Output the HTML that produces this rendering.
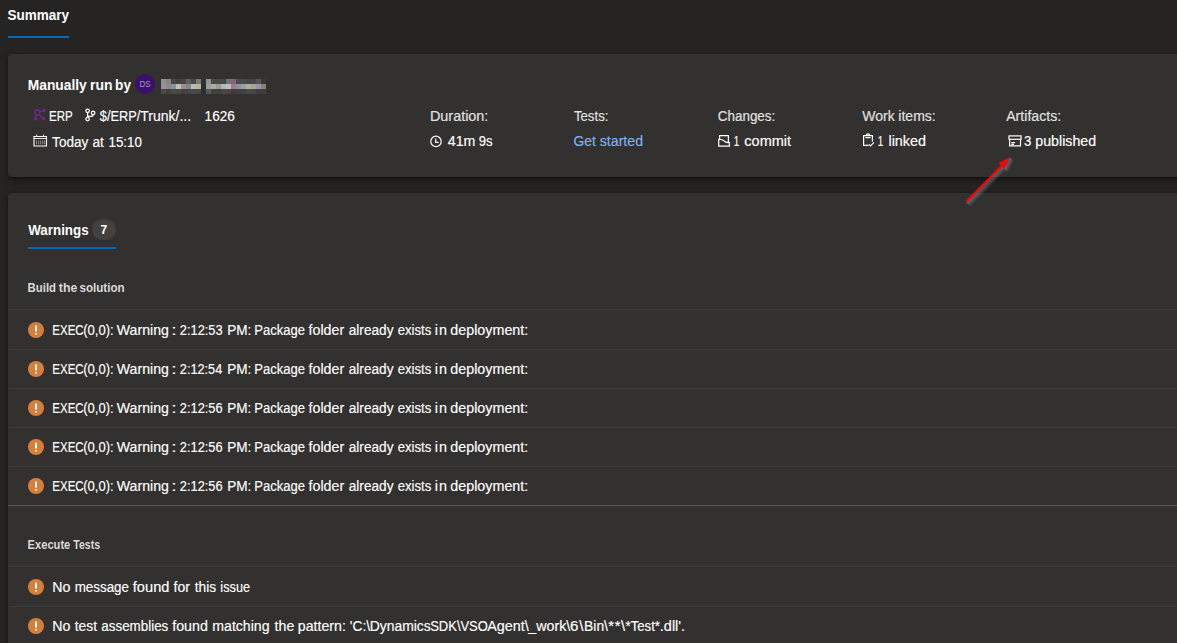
<!DOCTYPE html>
<html lang="en">
<head>
<meta charset="utf-8">
<title>Summary</title>
<style>
*{box-sizing:border-box;margin:0;padding:0}
html,body{width:1177px;height:643px;overflow:hidden;background:#252423}
body{font-family:"Liberation Sans",sans-serif;font-size:14px;color:#fff;position:relative}
.t{position:absolute;left:0;white-space:nowrap;line-height:20px;height:20px;width:1177px}
.t span{position:absolute;left:0;top:0;transform-origin:0 0;-webkit-text-stroke:.15px currentColor}
.sb{font-weight:bold}
.sb span,.av span{-webkit-text-stroke:0}
.av{color:#ab92cc}
.lbl{color:#e2e2e2}
.link{color:#7ab5f5}
.sec{color:#dadada}
.tabline{position:absolute;height:2px;background:#0069b9}
.card{position:absolute;left:8px;right:-12px;background:#323130;border-radius:4px;box-shadow:0 3.2px 7.2px rgba(0,0,0,.38),0 .6px 1.8px rgba(0,0,0,.26)}
#c1{top:54px;height:123px}
#c2{top:193px;height:470px}
.sep{position:absolute;left:8px;right:0;height:1px;background:#3c3b3a}
.in{left:9px}
.wi{position:absolute;left:28px;width:16px;height:16px}
.ov{position:absolute;left:0;top:0;pointer-events:none}
.avatar{position:absolute;left:135px;top:74px;width:20px;height:20px;border-radius:50%;background:#3a1168}
.badge{position:absolute;left:92px;top:219px;width:24px;height:21px;border-radius:10.5px;background:#434140}
</style>
</head>
<body>
<div class="t sb" id="tab" style="top:5px;font-size:14.5px"><span style="transform:translateX(7.47px) scaleX(0.933)">Summary</span></div>
<div class="tabline" style="left:8px;top:36px;width:61px"></div>

<div class="card" id="c1"></div>
<div class="t sb" id="mrb" style="top:75px;font-size:15px"><span style="transform:translateX(27.73px) scaleX(0.919)">Manually</span> <span style="transform:translateX(90.02px) scaleX(0.937)">run</span> <span style="transform:translateX(115.02px) scaleX(0.912)">by</span></div>
<div class="avatar"></div>
<div class="t av" id="ds" style="top:74px;font-size:8.5px"><span style="transform:translateX(139.45px) scaleX(0.939)">DS</span></div>
<div class="t" id="erp" style="top:106px;font-size:14px"><span style="transform:translateX(49.01px) scaleX(0.827)">ERP</span></div>
<div class="t" id="br" style="top:106px;font-size:14px"><span style="transform:translateX(99.8px) scaleX(0.914)">$/ERP/</span><span style="transform:translateX(140.3px)">Trunk/...</span></div>
<div class="t" id="num" style="top:106px;font-size:14px"><span style="transform:translateX(204.54px) scaleX(0.975)">1626</span></div>
<div class="t" id="date" style="top:132px;font-size:14px"><span style="transform:translateX(52.1px) scaleX(0.969)">Today</span> <span style="transform:translateX(92.51px) scaleX(0.976)">at</span> <span style="transform:translateX(108.53px) scaleX(0.953)">15:10</span></div>
<div class="t lbl" id="l1" style="top:106px;font-size:14px"><span style="transform:translateX(429.92px) scaleX(1.029)">Duration:</span></div>
<div class="t" id="v1" style="top:131px;font-size:14px"><span style="transform:translateX(447.73px) scaleX(1.015)">41m</span> <span style="transform:translateX(478.65px) scaleX(0.936)">9s</span></div>
<div class="t lbl" id="l2" style="top:106px;font-size:14px"><span style="transform:translateX(573.89px) scaleX(0.944)">Tests:</span></div>
<div class="t link" id="v2" style="top:131px;font-size:14px"><span style="transform:translateX(573.53px) scaleX(0.991)">Get</span> <span style="transform:translateX(599.73px) scaleX(1.012)">started</span></div>
<div class="t lbl" id="l3" style="top:106px;font-size:14px"><span style="transform:translateX(717.77px) scaleX(0.960)">Changes:</span></div>
<div class="t" id="v3" style="top:131px;font-size:14px"><span style="transform:translateX(733.74px) scaleX(0.700)">1</span> <span style="transform:translateX(744.35px) scaleX(1.035)">commit</span></div>
<div class="t lbl" id="l4" style="top:106px;font-size:14px"><span style="transform:translateX(862.3px)">Work</span> <span style="transform:translateX(898.35px)">items:</span></div>
<div class="t" id="v4" style="top:131px;font-size:14px"><span style="transform:translateX(877.74px) scaleX(0.700)">1</span> <span style="transform:translateX(888.45px) scaleX(1.027)">linked</span></div>
<div class="t lbl" id="l5" style="top:106px;font-size:14px"><span style="transform:translateX(1006.19px) scaleX(1.009)">Artifacts:</span></div>
<div class="t" id="v5" style="top:131px;font-size:14px"><span style="transform:translateX(1024.05px) scaleX(0.942)">3</span> <span style="transform:translateX(1035.3px) scaleX(1.015)">published</span></div>

<div class="card" id="c2"></div>
<div class="t sb" id="warn" style="top:220px;font-size:14.5px"><span style="transform:translateX(28.22px) scaleX(0.922)">Warnings</span></div>
<div class="badge"></div>
<div class="t sb" id="cnt" style="top:220px;font-size:12px"><span style="transform:translateX(100.58px)">7</span></div>
<div class="tabline" style="left:28px;top:247px;width:88px"></div>

<div class="t sec sb" id="s1" style="top:278px;font-size:13px"><span style="transform:translateX(27.59px) scaleX(0.876)">Build</span> <span style="transform:translateX(58.8px) scaleX(0.945)">the</span> <span style="transform:translateX(79.5px) scaleX(0.893)">solution</span></div>
<div class="sep" style="top:309px"></div>
<svg class="wi" style="top:322px" viewBox="0 0 16 16"><circle cx="8" cy="8" r="8" fill="#d67f3c"/><rect x="7" y="3.4" width="2" height="6.2" rx=".6" fill="#fff"/><rect x="7" y="10.9" width="2" height="1.6" rx=".5" fill="#fff"/></svg>
<div class="t" id="r1" style="top:320px;font-size:14px"><span style="transform:translateX(52.27px) scaleX(0.823)">EXEC</span><span style="transform:translateX(83.19px) scaleX(0.931)">(0,0):</span> <span style="transform:translateX(116.8px) scaleX(1.010)">Warning</span> <span style="transform:translateX(171.32px) scaleX(1.385)">:</span> <span style="transform:translateX(179.85px) scaleX(0.916)">2:12:53</span> <span style="transform:translateX(227.13px) scaleX(0.969)">PM:</span> <span style="transform:translateX(254.25px) scaleX(0.931)">Package</span> <span style="transform:translateX(308.6px) scaleX(1.016)">folder</span> <span style="transform:translateX(348.73px) scaleX(0.975)">already</span> <span style="transform:translateX(397.72px) scaleX(0.939)">exists</span> <span style="transform:translateX(434.87px) scaleX(1.022);letter-spacing:0.84px">in</span> <span style="transform:translateX(450.3px) scaleX(1.022)">deployment:</span></div>
<div class="sep in" style="top:349px"></div>
<svg class="wi" style="top:361px" viewBox="0 0 16 16"><circle cx="8" cy="8" r="8" fill="#d67f3c"/><rect x="7" y="3.4" width="2" height="6.2" rx=".6" fill="#fff"/><rect x="7" y="10.9" width="2" height="1.6" rx=".5" fill="#fff"/></svg>
<div class="t" id="r2" style="top:359px;font-size:14px"><span style="transform:translateX(52.27px) scaleX(0.823)">EXEC</span><span style="transform:translateX(83.19px) scaleX(0.931)">(0,0):</span> <span style="transform:translateX(116.8px) scaleX(1.010)">Warning</span> <span style="transform:translateX(171.32px) scaleX(1.385)">:</span> <span style="transform:translateX(179.85px) scaleX(0.908)">2:12:54</span> <span style="transform:translateX(227.13px) scaleX(0.969)">PM:</span> <span style="transform:translateX(254.25px) scaleX(0.931)">Package</span> <span style="transform:translateX(308.6px) scaleX(1.016)">folder</span> <span style="transform:translateX(348.73px) scaleX(0.975)">already</span> <span style="transform:translateX(397.72px) scaleX(0.939)">exists</span> <span style="transform:translateX(434.87px) scaleX(1.022);letter-spacing:0.84px">in</span> <span style="transform:translateX(450.3px) scaleX(1.022)">deployment:</span></div>
<div class="sep in" style="top:388px"></div>
<svg class="wi" style="top:400px" viewBox="0 0 16 16"><circle cx="8" cy="8" r="8" fill="#d67f3c"/><rect x="7" y="3.4" width="2" height="6.2" rx=".6" fill="#fff"/><rect x="7" y="10.9" width="2" height="1.6" rx=".5" fill="#fff"/></svg>
<div class="t" id="r3" style="top:398px;font-size:14px"><span style="transform:translateX(52.27px) scaleX(0.823)">EXEC</span><span style="transform:translateX(83.19px) scaleX(0.931)">(0,0):</span> <span style="transform:translateX(116.8px) scaleX(1.010)">Warning</span> <span style="transform:translateX(171.32px) scaleX(1.385)">:</span> <span style="transform:translateX(179.85px) scaleX(0.916)">2:12:56</span> <span style="transform:translateX(227.13px) scaleX(0.969)">PM:</span> <span style="transform:translateX(254.25px) scaleX(0.931)">Package</span> <span style="transform:translateX(308.6px) scaleX(1.016)">folder</span> <span style="transform:translateX(348.73px) scaleX(0.975)">already</span> <span style="transform:translateX(397.72px) scaleX(0.939)">exists</span> <span style="transform:translateX(434.87px) scaleX(1.022);letter-spacing:0.84px">in</span> <span style="transform:translateX(450.3px) scaleX(1.022)">deployment:</span></div>
<div class="sep in" style="top:427px"></div>
<svg class="wi" style="top:439px" viewBox="0 0 16 16"><circle cx="8" cy="8" r="8" fill="#d67f3c"/><rect x="7" y="3.4" width="2" height="6.2" rx=".6" fill="#fff"/><rect x="7" y="10.9" width="2" height="1.6" rx=".5" fill="#fff"/></svg>
<div class="t" id="r4" style="top:437px;font-size:14px"><span style="transform:translateX(52.27px) scaleX(0.823)">EXEC</span><span style="transform:translateX(83.19px) scaleX(0.931)">(0,0):</span> <span style="transform:translateX(116.8px) scaleX(1.010)">Warning</span> <span style="transform:translateX(171.32px) scaleX(1.385)">:</span> <span style="transform:translateX(179.85px) scaleX(0.916)">2:12:56</span> <span style="transform:translateX(227.13px) scaleX(0.969)">PM:</span> <span style="transform:translateX(254.25px) scaleX(0.931)">Package</span> <span style="transform:translateX(308.6px) scaleX(1.016)">folder</span> <span style="transform:translateX(348.73px) scaleX(0.975)">already</span> <span style="transform:translateX(397.72px) scaleX(0.939)">exists</span> <span style="transform:translateX(434.87px) scaleX(1.022);letter-spacing:0.84px">in</span> <span style="transform:translateX(450.3px) scaleX(1.022)">deployment:</span></div>
<div class="sep in" style="top:466px"></div>
<svg class="wi" style="top:478px" viewBox="0 0 16 16"><circle cx="8" cy="8" r="8" fill="#d67f3c"/><rect x="7" y="3.4" width="2" height="6.2" rx=".6" fill="#fff"/><rect x="7" y="10.9" width="2" height="1.6" rx=".5" fill="#fff"/></svg>
<div class="t" id="r5" style="top:476px;font-size:14px"><span style="transform:translateX(52.27px) scaleX(0.823)">EXEC</span><span style="transform:translateX(83.19px) scaleX(0.931)">(0,0):</span> <span style="transform:translateX(116.8px) scaleX(1.010)">Warning</span> <span style="transform:translateX(171.32px) scaleX(1.385)">:</span> <span style="transform:translateX(179.85px) scaleX(0.916)">2:12:56</span> <span style="transform:translateX(227.13px) scaleX(0.969)">PM:</span> <span style="transform:translateX(254.25px) scaleX(0.931)">Package</span> <span style="transform:translateX(308.6px) scaleX(1.016)">folder</span> <span style="transform:translateX(348.73px) scaleX(0.975)">already</span> <span style="transform:translateX(397.72px) scaleX(0.939)">exists</span> <span style="transform:translateX(434.87px) scaleX(1.022);letter-spacing:0.84px">in</span> <span style="transform:translateX(450.3px) scaleX(1.022)">deployment:</span></div>
<div class="sep" style="top:505px;background:#575655"></div>

<div class="t sec sb" id="s2" style="top:535px;font-size:13px"><span style="transform:translateX(27.6px) scaleX(0.856)">Execute</span> <span style="transform:translateX(73.27px) scaleX(0.814)">Tests</span></div>
<div class="sep" style="top:566px"></div>
<svg class="wi" style="top:579px" viewBox="0 0 16 16"><circle cx="8" cy="8" r="8" fill="#d67f3c"/><rect x="7" y="3.4" width="2" height="6.2" rx=".6" fill="#fff"/><rect x="7" y="10.9" width="2" height="1.6" rx=".5" fill="#fff"/></svg>
<div class="t" id="r6" style="top:577px;font-size:14px"><span style="transform:translateX(52.18px) scaleX(1.016)">No</span> <span style="transform:translateX(74.7px) scaleX(0.956)">message</span> <span style="transform:translateX(132.8px) scaleX(1.045)">found</span> <span style="transform:translateX(173.5px)">for</span> <span style="transform:translateX(194.7px) scaleX(0.984)">this</span> <span style="transform:translateX(220.37px) scaleX(0.907)">issue</span></div>
<div class="sep in" style="top:606px"></div>
<svg class="wi" style="top:618px" viewBox="0 0 16 16"><circle cx="8" cy="8" r="8" fill="#d67f3c"/><rect x="7" y="3.4" width="2" height="6.2" rx=".6" fill="#fff"/><rect x="7" y="10.9" width="2" height="1.6" rx=".5" fill="#fff"/></svg>
<div class="t" id="r7" style="top:616px;font-size:14px"><span style="transform:translateX(52.18px) scaleX(1.016)">No</span> <span style="transform:translateX(74.7px) scaleX(0.987)">test</span> <span style="transform:translateX(101.29px) scaleX(0.957)">assemblies</span> <span style="transform:translateX(172.2px) scaleX(1.018)">found</span> <span style="transform:translateX(212.33px) scaleX(1.006)">matching</span> <span style="transform:translateX(274.6px) scaleX(1.010)">the</span> <span style="transform:translateX(297.78px) scaleX(1.013)">pattern:</span> <span style="transform:translateX(349.85px) scaleX(0.985)">'C:\</span><span style="transform:translateX(369.75px) scaleX(0.992)">Dynamics</span><span style="transform:translateX(430.14px) scaleX(0.930)">SDK\</span><span style="transform:translateX(460.4px) scaleX(0.924)">VSO</span><span style="transform:translateX(487.27px) scaleX(1.026)">Agent\</span><span style="transform:translateX(528.24px) scaleX(1.020)">_work\</span><span style="transform:translateX(570.05px) scaleX(1.080);letter-spacing:0.62px">6\</span><span style="transform:translateX(584.05px) scaleX(0.991)">Bin\</span><span style="transform:translateX(608.34px) scaleX(1.047);letter-spacing:0.58px">**\</span><span style="transform:translateX(625.6px) scaleX(0.939)">*Test*</span><span style="transform:translateX(659.85px) scaleX(1.030)">.dll'.</span></div>
<svg class="ov" width="1177" height="643" viewBox="0 0 1177 643" aria-hidden="true">
<defs><linearGradient id="g1" gradientUnits="userSpaceOnUse" x1="966.5" y1="201.5" x2="971.3" y2="206.2"><stop offset="0" stop-color="#909090" stop-opacity=".5"/><stop offset=".45" stop-color="#909090" stop-opacity=".4"/><stop offset="1" stop-color="#909090" stop-opacity="0"/></linearGradient><linearGradient id="g2" gradientUnits="userSpaceOnUse" x1="1007" y1="162.8" x2="1012" y2="165.3"><stop offset="0" stop-color="#909090" stop-opacity=".5"/><stop offset=".4" stop-color="#909090" stop-opacity=".4"/><stop offset="1" stop-color="#909090" stop-opacity="0"/></linearGradient></defs>
<g shape-rendering="crispEdges"><rect x="161" y="79" width="5" height="5" fill="#908d9c"/><rect x="166" y="79" width="5" height="5" fill="#86837a"/><rect x="171" y="79" width="5" height="5" fill="#484848"/><rect x="176" y="79" width="5" height="5" fill="#44403f"/><rect x="181" y="79" width="5" height="5" fill="#484644"/><rect x="186" y="79" width="5" height="5" fill="#605f58"/><rect x="191" y="79" width="5" height="5" fill="#484847"/><rect x="196" y="79" width="5" height="5" fill="#7d7a69"/><rect x="201" y="79" width="5" height="5" fill="#2c3440"/><rect x="206" y="79" width="5" height="5" fill="#95948b"/><rect x="211" y="79" width="5" height="5" fill="#494845"/><rect x="216" y="79" width="5" height="5" fill="#484844"/><rect x="221" y="79" width="5" height="5" fill="#444848"/><rect x="226" y="79" width="5" height="5" fill="#6e746d"/><rect x="231" y="79" width="5" height="5" fill="#82677c"/><rect x="236" y="79" width="5" height="5" fill="#484c4f"/><rect x="241" y="79" width="5" height="5" fill="#4b4b49"/><rect x="246" y="79" width="5" height="5" fill="#454347"/><rect x="251" y="79" width="5" height="5" fill="#484543"/><rect x="256" y="79" width="5" height="5" fill="#525456"/><rect x="261" y="79" width="5" height="5" fill="#3b3734"/><rect x="161" y="84" width="5" height="5" fill="#988da0"/><rect x="166" y="84" width="5" height="5" fill="#8b8d7c"/><rect x="171" y="84" width="5" height="5" fill="#8392a6"/><rect x="176" y="84" width="5" height="5" fill="#bfc0ad"/><rect x="181" y="84" width="5" height="5" fill="#9e8b98"/><rect x="186" y="84" width="5" height="5" fill="#848687"/><rect x="191" y="84" width="5" height="5" fill="#b6bdbd"/><rect x="196" y="84" width="5" height="5" fill="#c3b590"/><rect x="201" y="84" width="5" height="5" fill="#2b3035"/><rect x="206" y="84" width="5" height="5" fill="#9a9fa3"/><rect x="211" y="84" width="5" height="5" fill="#acaba4"/><rect x="216" y="84" width="5" height="5" fill="#a1988b"/><rect x="221" y="84" width="5" height="5" fill="#abb9c2"/><rect x="226" y="84" width="5" height="5" fill="#bfbdb6"/><rect x="231" y="84" width="5" height="5" fill="#9d7c92"/><rect x="236" y="84" width="5" height="5" fill="#889498"/><rect x="241" y="84" width="5" height="5" fill="#9a9da6"/><rect x="246" y="84" width="5" height="5" fill="#b6b095"/><rect x="251" y="84" width="5" height="5" fill="#a3a49c"/><rect x="256" y="84" width="5" height="5" fill="#9d92aa"/><rect x="261" y="84" width="5" height="5" fill="#858371"/><rect x="161" y="89" width="5" height="5" fill="#49494a"/><rect x="166" y="89" width="5" height="5" fill="#443f3b"/><rect x="171" y="89" width="5" height="5" fill="#494949"/><rect x="176" y="89" width="5" height="5" fill="#484842"/><rect x="181" y="89" width="5" height="5" fill="#443e3e"/><rect x="186" y="89" width="5" height="5" fill="#45453f"/><rect x="191" y="89" width="5" height="5" fill="#494949"/><rect x="196" y="89" width="5" height="5" fill="#4a4842"/><rect x="201" y="89" width="5" height="5" fill="#2b3034"/><rect x="206" y="89" width="5" height="5" fill="#595754"/><rect x="211" y="89" width="5" height="5" fill="#42413f"/><rect x="216" y="89" width="5" height="5" fill="#41413e"/><rect x="221" y="89" width="5" height="5" fill="#484848"/><rect x="226" y="89" width="5" height="5" fill="#47453e"/><rect x="231" y="89" width="5" height="5" fill="#403a3d"/><rect x="236" y="89" width="5" height="5" fill="#40413f"/><rect x="241" y="89" width="5" height="5" fill="#424244"/><rect x="246" y="89" width="5" height="5" fill="#484844"/><rect x="251" y="89" width="5" height="5" fill="#484843"/><rect x="256" y="89" width="5" height="5" fill="#403d42"/><rect x="261" y="89" width="5" height="5" fill="#413e38"/></g>
<g stroke="#75258f" fill="none" stroke-width="1.4"><circle cx="37.3" cy="112.5" r="2.5"/><path d="M39.6 111.7 43 110.7M36.6 115 35.9 117.6M39.1 114.4 42.3 117.4"/></g>
<g fill="#75258f"><circle cx="44.2" cy="110.4" r="1.75"/><circle cx="35.6" cy="119.1" r="1.75"/><circle cx="43.4" cy="118.4" r="1.75"/></g>
<g stroke="#fff" fill="none" stroke-width="1.25"><circle cx="87.6" cy="110.8" r="1.75"/><circle cx="87.6" cy="119" r="1.75"/><circle cx="93.1" cy="112.9" r="1.75"/><path d="M87.6 112.6V117.2M93.1 114.7Q93.1 116.4 91 116.4H87.8"/></g>
<g stroke="#fff" fill="none" stroke-width="1"><path d="M34 136.5H46.5V146H34Z" stroke-width="1.1"/><path d="M34 138.5H46M36.7 134.6V136M43.6 134.6V136" stroke-width=".9"/><path d="M36.5 140.5V144.3M38.6 140.5V144.3M40.7 140.5V144.3M42.8 140.5V144.3M44.6 140.5V144.3" stroke-width=".8" opacity=".55"/></g>
<g stroke="#fff" fill="none" stroke-width="1.2"><circle cx="436" cy="141.4" r="5.2"/><path d="M435.7 138.4V142.4H438.6"/></g>
<g stroke="#fff" fill="none" stroke-width="1.2"><path d="M719.6 139.4V135.7H728.4V142.5M718.7 139.5H720.6Q722.8 139.6 724.4 141.2 725.9 142.6 729.4 142.6V146.2H718.7Z"/></g>
<g stroke="#fff" fill="none" stroke-width="1.2"><path d="M868.6 145.4H863.6V135.6H872.4V141.5M865.4 137.6H870.6M866.2 135.6Q866.4 133.9 868 133.9 869.6 133.9 869.8 135.6M869 144.3 870.5 145.8 874 142.3"/></g>
<g stroke="#fff" fill="none" stroke-width="1.2"><rect x="1009" y="135.9" width="12.1" height="3.4"/><path d="M1009.6 139.3V145.9H1020.5V139.3M1011.3 142.6H1015M1011.3 144.3H1014"/></g>
<g><path d="M966.2 202.4 1003.2 164.8 1008 169.6 971 207.2Z" fill="url(#g1)"/><path d="M1009.8 157.2 1004.1 168.5 1008 172.4 1014.2 161.6Z" fill="url(#g2)"/><path d="M966.5 201.5 1002 165.4" stroke="#f00" stroke-width="2.2" fill="none"/><path d="M1009.8 157.2 998.4 163.1 1004.1 168.5Z" fill="#f00"/></g>
</svg>
</body>
</html>
